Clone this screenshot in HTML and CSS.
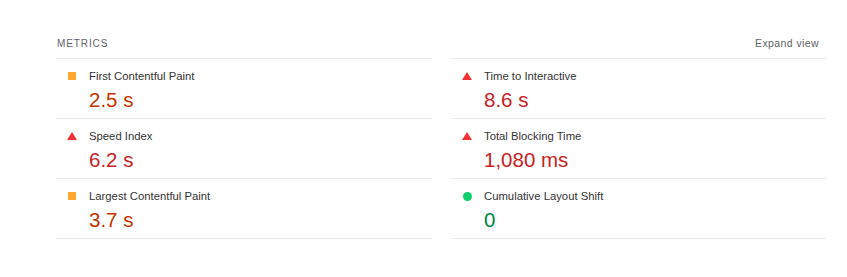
FILE: index.html
```html
<!DOCTYPE html>
<html lang="en">
<head>
<meta charset="utf-8">
<title>Metrics</title>
<link rel="stylesheet" href="styles.css">
</head>
<body>
<section class="metrics">
  <div class="header">
    <span class="title">METRICS</span>
    <span class="expand">Expand view</span>
  </div>
  <div class="grid">
    <div class="col">
      <div class="metric average">
        <div class="top"><span class="icon"><span class="square"></span></span><span class="label">First Contentful Paint</span></div>
        <div class="value">2.5 s</div>
      </div>
      <div class="metric fail">
        <div class="top"><span class="icon"><span class="triangle"></span></span><span class="label">Speed Index</span></div>
        <div class="value">6.2 s</div>
      </div>
      <div class="metric average">
        <div class="top"><span class="icon"><span class="square"></span></span><span class="label">Largest Contentful Paint</span></div>
        <div class="value">3.7 s</div>
      </div>
    </div>
    <div class="col">
      <div class="metric fail">
        <div class="top"><span class="icon"><span class="triangle"></span></span><span class="label">Time to Interactive</span></div>
        <div class="value">8.6 s</div>
      </div>
      <div class="metric fail">
        <div class="top"><span class="icon"><span class="triangle"></span></span><span class="label">Total Blocking Time</span></div>
        <div class="value">1,080 ms</div>
      </div>
      <div class="metric pass">
        <div class="top"><span class="icon"><span class="circle"></span></span><span class="label">Cumulative Layout Shift</span></div>
        <div class="value">0</div>
      </div>
    </div>
  </div>
</section>
</body>
</html>
```
FILE: styles.css
```css
html, body {
  margin: 0;
  padding: 0;
  background: #ffffff;
}
body {
  font-family: "Liberation Sans", Arial, sans-serif;
  color: #212121;
}
.metrics {
  width: 771px;
  margin-left: 56px;
  padding-top: 36px;
}
.header {
  display: flex;
  justify-content: space-between;
  align-items: center;
  height: 14px;
  padding: 0 8px 0 1px;
  margin-bottom: 8px;
}
.title {
  font-size: 10px;
  letter-spacing: 0.9px;
  color: #5f6368;
}
.expand {
  font-size: 10.5px;
  letter-spacing: 0.4px;
  color: #5f6368;
}
.grid {
  display: grid;
  grid-template-columns: 376px 376px;
  column-gap: 19px;
}
.col {
  border-bottom: 1px solid #ebebeb;
}
.metric {
  border-top: 1px solid #ebebeb;
  padding: 8px 0 5px 0;
}
.top {
  display: flex;
  align-items: center;
  height: 18px;
}
.icon {
  width: 10px;
  margin-left: 11px;
  display: flex;
  justify-content: center;
  align-items: center;
  height: 18px;
}
.label {
  margin-left: 12px;
  font-size: 11.3px;
  color: #333333;
}
.value {
  margin-top: 2px;
  margin-left: 33px;
  font-size: 20.5px;
  line-height: 26px;
}
.square {
  width: 8px;
  height: 8px;
  background: #ffa633;
}
.triangle {
  width: 0;
  height: 0;
  border-left: 5px solid transparent;
  border-right: 5px solid transparent;
  border-bottom: 8.5px solid #f33333;
}
.circle {
  width: 9px;
  height: 9px;
  border-radius: 50%;
  background: #0cce6b;
}
.average .value { color: #c33300; }
.fail .value { color: #c7221f; }
.pass .value { color: #018642; }
```
